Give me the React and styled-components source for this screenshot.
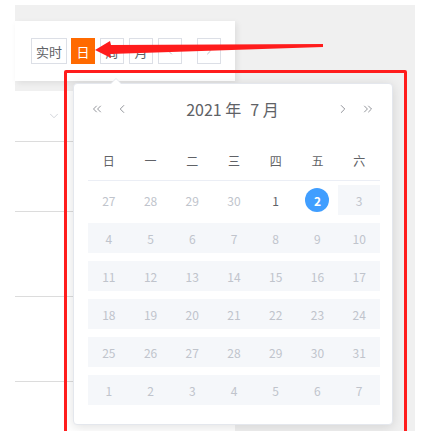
import React from "react";
import styled, { createGlobalStyle } from "styled-components";
import { ChevronDown, ChevronLeft, ChevronRight, ChevronsLeft, ChevronsRight } from "lucide-react";

const GlobalStyle = createGlobalStyle`
  html, body {
    margin: 0;
    padding: 0;
    background: #fff;
    overflow: hidden;
  }
  body {
    font-family: "Noto Sans CJK SC", "Noto Sans", "Liberation Sans", sans-serif;
  }
  * {
    box-sizing: border-box;
  }
`;

const Page = styled.div`
  position: relative;
  width: 434px;
  height: 431px;
  padding: 5px 19px 0 15px;
  overflow: hidden;
`;

const GrayArea = styled.div`
  background: #f0f0f0;
  height: 430px;
  padding-top: 16px;
`;

const ToolbarCard = styled.div`
  width: 220px;
  height: 60px;
  background: #fff;
  box-shadow: 2px 2px 6px rgba(0, 0, 0, 0.08);
  display: flex;
  align-items: center;
  padding-left: 16px;
`;

const ToolButton = styled.div`
  height: 26px;
  min-width: ${({ wide }) => (wide ? "36px" : "24px")};
  margin-left: ${({ gap }) => gap || 0}px;
  display: flex;
  align-items: center;
  justify-content: center;
  font-size: 13px;
  color: ${({ active }) => (active ? "#fff" : "#606266")};
  background: ${({ active }) => (active ? "#ff6a00" : "#fff")};
  border: 1px solid ${({ active }) => (active ? "#ff6a00" : "#dcdfe6")};
`;

const ListPanel = styled.div`
  width: 220px;
  margin-top: 10px;
  height: 340px;
  background: #fff;
`;

const ListRow = styled.div`
  height: ${({ h }) => h}px;
  border-bottom: 1px solid #dcdcdc;
  display: flex;
  align-items: center;
  padding-left: 32px;
  color: #c0c4cc;
`;

const Popup = styled.div`
  position: absolute;
  left: 73px;
  top: 83px;
  width: 320px;
  background: #fff;
  border: 1px solid #e4e7ed;
  border-radius: 4px;
  box-shadow: 0 2px 12px rgba(0, 0, 0, 0.12);
  color: #606266;

  &::before {
    content: "";
    position: absolute;
    top: -6px;
    left: 36px;
    border: 6px solid transparent;
    border-top: 0;
    border-bottom-color: #e4e7ed;
  }
  &::after {
    content: "";
    position: absolute;
    top: -5px;
    left: 36px;
    border: 6px solid transparent;
    border-top: 0;
    border-bottom-color: #fff;
  }
`;

const Header = styled.div`
  height: 28px;
  margin: 11px 17px 0 16px;
  display: flex;
  align-items: center;
`;

const NavGroup = styled.div`
  display: flex;
  align-items: center;
  gap: 11px;
  color: #7a7d84;
  width: 60px;
  justify-content: ${({ right }) => (right ? "flex-end" : "flex-start")};
`;

const Title = styled.div`
  flex: 1;
  text-align: center;
  font-size: 16px;
  color: #606266;
  span + span {
    margin-left: 9px;
  }
`;

const Table = styled.div`
  width: 292px;
  margin: 17px 0 15px 14px;
`;

const WeekRow = styled.div`
  display: grid;
  grid-template-columns: repeat(7, 1fr);
  height: 41px;
  border-bottom: 1px solid #ebeef5;
`;

const WeekCell = styled.div`
  display: flex;
  align-items: center;
  justify-content: center;
  font-size: 12px;
  color: #606266;
`;

const DateRow = styled.div`
  display: grid;
  grid-template-columns: repeat(7, 1fr);
  padding: 4px 0;
`;

const DateCell = styled.div`
  height: 30px;
  display: flex;
  align-items: center;
  justify-content: center;
  font-size: 12px;
  background: ${({ disabled }) => (disabled ? "#f5f7fa" : "transparent")};
  color: ${({ kind }) => (kind === "normal" ? "#606266" : "#c0c4cc")};
`;

const Today = styled.span`
  width: 24px;
  height: 24px;
  border-radius: 50%;
  background: #409eff;
  color: #fff;
  font-weight: 700;
  display: flex;
  align-items: center;
  justify-content: center;
`;

const RedFrame = styled.div`
  position: absolute;
  left: 64px;
  top: 70px;
  width: 343px;
  height: 380px;
  border: 3px solid #ff1c1c;
  border-radius: 2px;
  pointer-events: none;
`;

const Overlay = styled.svg`
  position: absolute;
  left: 0;
  top: 0;
  pointer-events: none;
`;

const weekDays = ["日", "一", "二", "三", "四", "五", "六"];

const rows = [
  [27, 28, 29, 30, 1, 2, 3],
  [4, 5, 6, 7, 8, 9, 10],
  [11, 12, 13, 14, 15, 16, 17],
  [18, 19, 20, 21, 22, 23, 24],
  [25, 26, 27, 28, 29, 30, 31],
  [1, 2, 3, 4, 5, 6, 7],
];

function cellInfo(r, c) {
  if (r === 0 && c < 4) return { kind: "prev", disabled: false };
  if (r === 0 && c === 4) return { kind: "normal", disabled: false };
  if (r === 0 && c === 5) return { kind: "today", disabled: false };
  return { kind: "disabled", disabled: true };
}

function App() {
  return (
    <>
      <GlobalStyle />
      <Page>
        <GrayArea>
          <ToolbarCard>
            <ToolButton wide>实时</ToolButton>
            <ToolButton active gap={4}>日</ToolButton>
            <ToolButton gap={5}>周</ToolButton>
            <ToolButton gap={5}>月</ToolButton>
            <ToolButton gap={5}>
              <ChevronLeft size={12} strokeWidth={1.5} color="#a8abb2" />
            </ToolButton>
            <ToolButton gap={15}>
              <ChevronRight size={12} strokeWidth={1.5} color="#a8abb2" />
            </ToolButton>
          </ToolbarCard>
          <ListPanel>
            <ListRow h={51}>
              <span style={{ flex: 1 }} />
              <ChevronDown size={14} strokeWidth={1.2} />
              <span style={{ width: 174 }} />
            </ListRow>
            <ListRow h={70} />
            <ListRow h={85} />
            <ListRow h={85} />
          </ListPanel>
        </GrayArea>

        <Popup>
          <Header>
            <NavGroup>
              <ChevronsLeft size={14} strokeWidth={1.4} />
              <ChevronLeft size={14} strokeWidth={1.4} />
            </NavGroup>
            <Title>
              <span>2021 年</span>
              <span>7 月</span>
            </Title>
            <NavGroup right>
              <ChevronRight size={14} strokeWidth={1.4} />
              <ChevronsRight size={14} strokeWidth={1.4} />
            </NavGroup>
          </Header>
          <Table>
            <WeekRow>
              {weekDays.map((d) => (
                <WeekCell key={d}>{d}</WeekCell>
              ))}
            </WeekRow>
            {rows.map((row, r) => (
              <DateRow key={r}>
                {row.map((n, c) => {
                  const info = cellInfo(r, c);
                  return (
                    <DateCell key={c} kind={info.kind} disabled={info.disabled}>
                      {info.kind === "today" ? <Today>{n}</Today> : n}
                    </DateCell>
                  );
                })}
              </DateRow>
            ))}
          </Table>
        </Popup>

        <RedFrame />
        <Overlay width="434" height="431" viewBox="0 0 434 431">
          <polygon
            points="323,44 323,47 110,54 111,58 95,50 110,41 111,45"
            fill="#ff1c1c"
          />
        </Overlay>
      </Page>
    </>
  );
}

export default App;
